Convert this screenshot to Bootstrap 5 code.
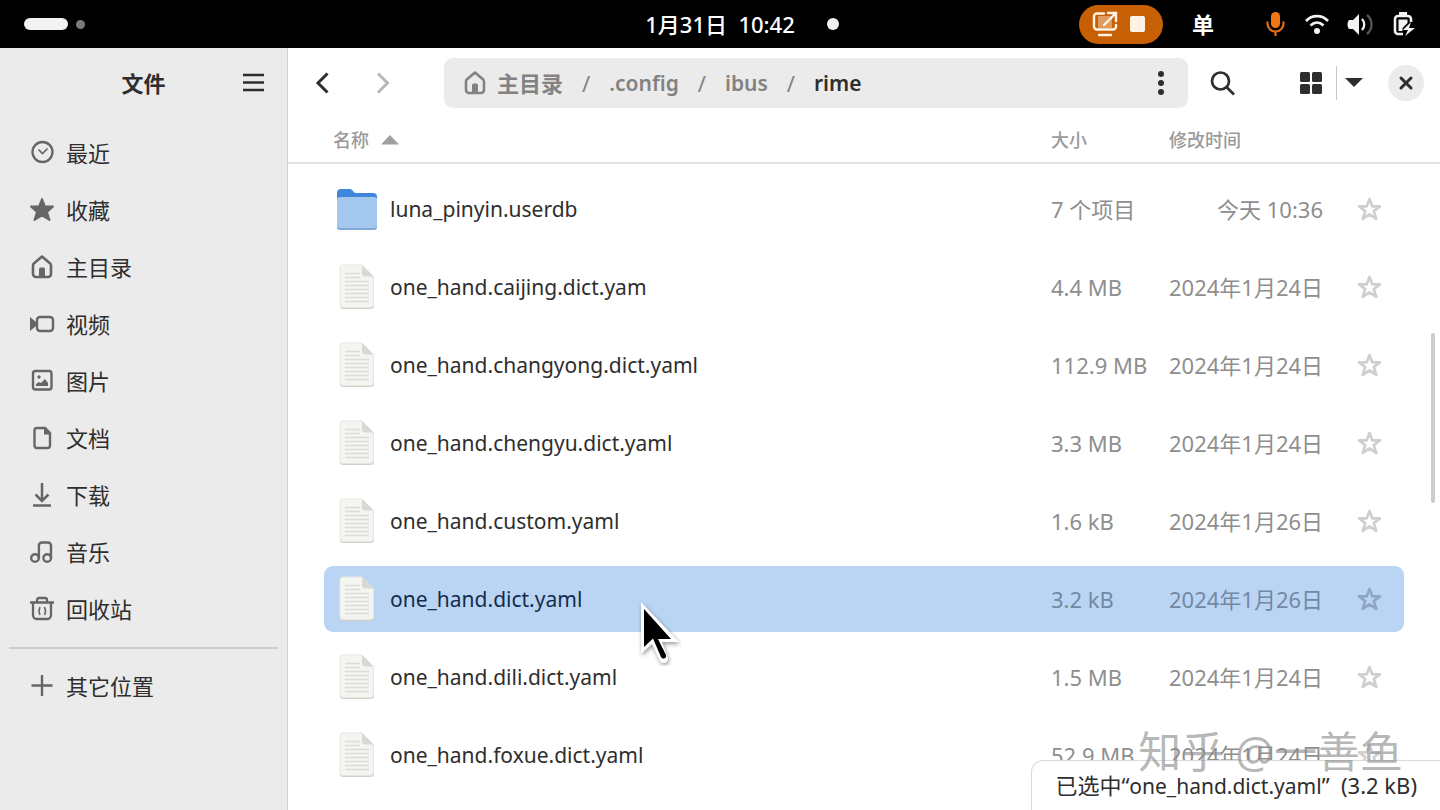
<!DOCTYPE html>
<html lang="zh-CN">
<head>
<meta charset="utf-8">
<meta name="viewport" content="width=device-width, initial-scale=1">
<title>rime</title>
<link rel="stylesheet" href="https://cdn.jsdelivr.net/npm/bootstrap@5.3.0/dist/css/bootstrap.min.css">
<style>
body{font:400 22px/32px "Noto Sans","Noto Sans CJK SC",sans-serif;color:#2e2e2e;background:#fff}
svg{display:block;flex:none}
button{font:inherit}
.topbar{height:48px;font-weight:500}
.topbar .side{flex:1 1 0}
.pill{width:44px;height:12px;border-radius:6px;background:#f2f2f2}
.dot{width:9px;height:9px;border-radius:50%;background:#7a7a7a}
.notice{width:12px;height:12px;border-radius:50%;background:#f2f2f2}
.tray{gap:17px}
.plain{border:0;background:none;padding:0;color:inherit;display:flex;align-items:center;justify-content:center}
.plain.record{width:84px;height:39px;background:#c75f05}
.plain.closebtn{width:36px;height:36px;border-radius:50%;background:#ebebeb}
.sidebar{width:288px;background:#ebebeb;border-right:1px solid #d2d2d2}
.headbar{height:70px}
.apptitle{font-size:22px;line-height:32px}
.places{padding-top:6px}
.places a{height:57px;padding-left:28px;gap:10px;color:#2e2e2e}
.places svg{color:#666}
.places hr{margin:10px 9px 8px;border-top:2px solid #ccc;opacity:1}
.pathbar{height:50px;background:#ebebeb;border-radius:9px;font-weight:600;padding:0 17px}
.pathbar a,.pathbar .sep{color:#828282}
.pathbar .sep{font-weight:400;padding:0 19px}
.latin{font-size:21px}
.plain.split{border-left:1px solid #c8c8c8;height:34px;margin-left:12px;margin-right:25px}
.listing{padding:0 36px;display:flow-root;position:relative}
.listing::before{content:"";position:absolute;left:0;right:0;top:44px;border-top:2px solid #e4e4e4}
.files{width:100%;table-layout:fixed;border-collapse:separate;border-spacing:0 12px;margin-top:-12px}
.files th{height:46px;font-size:18px;font-weight:500;color:#9a9a9a;padding:0 0 3px;line-height:24px}
.files th:first-child{padding-left:9px}
.files td{height:66px;padding:0;color:#8e8e8e;white-space:nowrap}
.files td:first-child{padding-left:11px;color:#2e2e2e;border-radius:9px 0 0 9px}
.files td:last-child{border-radius:0 9px 9px 0;color:#cfcfcf}
.files .when{text-align:right;padding-right:11px}
.files .picked td{background:#bad5f4;color:#7388a3}
.files .picked td:first-child{color:#142c4c}
.files .picked td:last-child{color:#8ea6c3}
.filecell{gap:11px}
.c-size{width:118px}.c-date{width:165px}.c-star{width:70px}
.thumb{right:5px;top:285px;width:4px;height:170px;border-radius:2px;background:#ccc}
.status{right:0;bottom:0;padding:8px 23px;border:1px solid #dadada;border-width:1px 0 0 1px;border-radius:12px 0 0 0;background:#fff}
.pointer{left:636px;top:598px;z-index:5;pointer-events:none}
.credit{right:37px;bottom:30px;font-size:43px;line-height:56px;color:#8c8c8ca0;z-index:6;pointer-events:none}
</style>
</head>
<body class="vh-100 d-flex flex-column overflow-hidden position-relative">
<svg class="d-none" aria-hidden="true">
<defs>
<symbol id="doc" viewBox="0 0 44 52"><path d="M8 6h19l12 11v28a3 3 0 0 1-3 3H8a3 3 0 0 1-3-3V9a3 3 0 0 1 3-3z" fill="#d2d2cc"/><path d="M8 4h19l11.500 11.500v28a3 3 0 0 1-3 3H8a3 3 0 0 1-3-3V7a3 3 0 0 1 3-3z" fill="#f4f4f0" stroke="#e6e6e1"/><path d="M27 4l11.500 11.500H30a3 3 0 0 1-3-3z" fill="#d9d9d4"/><path d="M10 12.500h15M10 16.500h15M10 20.500h24M10 24.500h24M10 28.500h24M10 32.500h24M10 36.500h24M10 40.500h24" stroke="#dcdcd7" stroke-width="1.300"/></symbol>
<symbol id="star" viewBox="0 0 24 24"><path d="M12 2l2.700 7h7.300l-5.900 4.500 2.400 7.500L12 16.600 5.500 21l2.400-7.500L2 9h7.300z" fill="none" stroke="currentColor" stroke-width="2.600" stroke-linejoin="round"/></symbol>
<symbol id="home" viewBox="0 0 28 28"><path d="M5 12.500c0-1 .4-1.600 1.100-2.200L14 3.600l7.900 6.700c.7.600 1.100 1.200 1.100 2.200V21a3 3 0 0 1-3 3H8a3 3 0 0 1-3-3z" fill="none" stroke="currentColor" stroke-width="2.600" stroke-linejoin="round"/><path d="M11 24v-8a1.500 1.500 0 0 1 1.500-1.500h3A1.500 1.500 0 0 1 17 16v8z" fill="currentColor"/></symbol>
</defs>
</svg>

<header class="topbar bg-black text-white d-flex align-items-center">
<div class="side d-flex align-items-center gap-2 ps-4"><span class="pill"></span><span class="dot"></span></div>
<div class="d-flex align-items-center"><time class="ms-5 me-4">1月31日&nbsp; 10:42</time><span class="notice ms-2 me-1"></span></div>
<div class="side d-flex align-items-center justify-content-end tray pe-4">
<button class="plain record rounded-pill gap-2 me-2" aria-label="停止录制">
<svg width="26" height="26" viewBox="0 0 26 26" fill="none" stroke="#fff3e4" stroke-width="2.400" stroke-linecap="round"><path d="M6 5h14v12H6z" fill="#df9b60" stroke="none"/><path d="M12 2.500H5A3 3 0 0 0 2 5.500v10a3 3 0 0 0 3 3h16a3 3 0 0 0 3-3V14M7 24h12M12 14L23 3M16 2h8v8"/></svg>
<svg width="24" height="24" viewBox="0 0 24 24"><rect x="4" y="4" width="15" height="16" rx="2" fill="#fff3e4"/></svg>
</button>
<span class="ms-1 me-4 fw-bold">单</span>
<svg class="ms-2" width="24" height="26" viewBox="0 0 24 26" fill="none" stroke="#e66d0c" stroke-width="2.200"><rect x="8" y="1" width="9" height="16" rx="4.500" fill="#f07814" stroke="none"/><path d="M4.500 10.500v2a8 8 0 0 0 16 0v-2M12.500 20v5"/></svg>
<svg width="26" height="26" viewBox="0 0 26 26" fill="none" stroke="#f2f2f2" stroke-width="2.600"><path d="M2 10c6-6.500 16-6.500 22 0M6.500 14.500c4-4 9-4 13 0" /><circle cx="13" cy="20" r="3" fill="#f2f2f2" stroke="none"/></svg>
<svg width="26" height="26" viewBox="0 0 26 26" fill="none" stroke-width="2.300"><path d="M2 9h4l6-6v21l-6-6H2c-2-2-2-7 0-9z" fill="#f2f2f2"/><path d="M15 8c3 3 3 8 0 11" stroke="#f2f2f2"/><path d="M20 4c6 5 6 14 0 19" stroke="#555"/></svg>
<svg width="26" height="26" viewBox="0 0 26 26"><path d="M13 23H8a3 3 0 0 1-3-3V8a3 3 0 0 1 3-3h10a3 3 0 0 1 3 3v3" fill="none" stroke="#f2f2f2" stroke-width="2.600"/><path d="M9 1h8v4H9zM8.500 8.500h9V12l-5 5v3h-4zM21 11l-8 8h5l-3 6 10-8h-6z" fill="#f2f2f2"/></svg>
</div>
</header>

<div class="d-flex flex-grow-1 position-relative overflow-hidden">
<aside class="sidebar flex-shrink-0">
<div class="headbar d-flex align-items-center position-relative justify-content-center">
<h1 class="apptitle m-0 fw-bold">文件</h1>
<button class="plain position-absolute end-0 me-3 p-1" aria-label="菜单"><svg width="28" height="28" viewBox="0 0 28 28"><path d="M4 6h21M4 13.500h21M4 21h21" stroke="#2e2e2e" stroke-width="2.600"/></svg></button>
</div>
<nav class="places d-flex flex-column" aria-label="位置">
<a href="#" class="d-flex align-items-center text-decoration-none"><svg width="28" height="28" viewBox="0 0 28 28" fill="none" stroke="currentColor"><circle cx="14.500" cy="13" r="10" stroke-width="2.300"/><path d="M10.500 10.500l4 4 5-5" stroke-width="1.700"/></svg>最近</a>
<a href="#" class="d-flex align-items-center text-decoration-none"><svg width="28" height="28" viewBox="0 0 28 28"><path d="M14 3l3 7.500h8L19 16l2.500 8L14 19.500 6.500 24 9 16l-6-5.500h8z" fill="currentColor" stroke="currentColor" stroke-width="2" stroke-linejoin="round"/></svg>收藏</a>
<a href="#" class="d-flex align-items-center text-decoration-none"><svg width="28" height="28"><use href="#home"/></svg>主目录</a>
<a href="#" class="d-flex align-items-center text-decoration-none"><svg width="28" height="28" viewBox="0 0 28 28"><path d="M2 7l6 5v4l-6 5z" fill="currentColor"/><rect x="9" y="7" width="16" height="14" rx="3" fill="none" stroke="currentColor" stroke-width="2.400"/></svg>视频</a>
<a href="#" class="d-flex align-items-center text-decoration-none"><svg width="28" height="28" viewBox="0 0 28 28"><rect x="5" y="4" width="18.500" height="18.500" rx="2.500" fill="none" stroke="currentColor" stroke-width="2.400"/><circle cx="11" cy="10" r="1.700" fill="currentColor"/><path d="M8 19v-2l3-2 2 1 4-4 3 4v3z" fill="currentColor"/></svg>图片</a>
<a href="#" class="d-flex align-items-center text-decoration-none"><svg width="28" height="28" viewBox="0 0 28 28"><path d="M9 4h8l5 5v12.500a2.500 2.500 0 0 1-2.500 2.500H9a2.500 2.500 0 0 1-2.500-2.500v-15A2.500 2.500 0 0 1 9 4z" fill="none" stroke="currentColor" stroke-width="2.400"/><path d="M16 4v6.500h6.500z" fill="currentColor"/></svg>文档</a>
<a href="#" class="d-flex align-items-center text-decoration-none"><svg width="28" height="28" viewBox="0 0 28 28"><path d="M14 2v18M7.500 13.500l6.500 6.500 6.500-6.500M5 24.500h18" fill="none" stroke="currentColor" stroke-width="2.500"/></svg>下载</a>
<a href="#" class="d-flex align-items-center text-decoration-none"><svg width="28" height="28" viewBox="0 0 28 28" fill="none" stroke="currentColor" stroke-width="2.400"><circle cx="7" cy="20" r="3.800"/><circle cx="19.200" cy="20" r="3.800"/><path d="M10.900 20V7.500a3 3 0 0 1 3-3H20a3 3 0 0 1 3 3V20"/></svg>音乐</a>
<a href="#" class="d-flex align-items-center text-decoration-none"><svg width="28" height="28" viewBox="0 0 28 28" fill="none" stroke="currentColor" stroke-width="2.300"><path d="M2 7.500h24M9 7V5a2 2 0 0 1 2-2h6a2 2 0 0 1 2 2v2M5 8v12a4 4 0 0 0 4 4h10a4 4 0 0 0 4-4V8"/><path d="M12 12q-2 4 0 8M16.500 12q2 4 0 8" stroke-width="1.600"/></svg>回收站</a>
<hr>
<a href="#" class="d-flex align-items-center text-decoration-none"><svg width="28" height="28" viewBox="0 0 28 28"><path d="M14 3v21M3.500 13.500h21" stroke="currentColor" stroke-width="2.400"/></svg>其它位置</a>
</nav>
</aside>

<main class="flex-grow-1">
<div class="headbar d-flex align-items-center ps-4 pe-3">
<button class="plain" aria-label="后退"><svg width="22" height="28" viewBox="0 0 22 28"><path d="M15.500 4.500L6 14l9.500 9.500" fill="none" stroke="#2e2e2e" stroke-width="3"/></svg></button>
<button class="plain ms-4 ps-3" aria-label="前进" disabled><svg width="22" height="28" viewBox="0 0 22 28"><path d="M4 4.500l9.500 9.500L4 23.500" fill="none" stroke="#b8b8b8" stroke-width="3"/></svg></button>
<nav class="pathbar d-flex align-items-center flex-grow-1 ms-5" aria-label="路径">
<a href="#" class="d-flex align-items-center text-decoration-none gap-2"><svg width="28" height="28"><use href="#home"/></svg>主目录</a>
<span class="sep">/</span><a href="#" class="latin text-decoration-none">.config</a>
<span class="sep">/</span><a href="#" class="latin text-decoration-none">ibus</a>
<span class="sep">/</span><span class="latin">rime</span>
<button class="plain ms-auto" aria-label="更多"><svg width="20" height="28" viewBox="0 0 20 28" fill="#2e2e2e"><circle cx="10" cy="5" r="3"/><circle cx="10" cy="14" r="3"/><circle cx="10" cy="23" r="3"/></svg></button>
</nav>
<button class="plain ms-3 ps-1" aria-label="搜索"><svg width="28" height="28" viewBox="0 0 28 28" fill="none" stroke="#2e2e2e" stroke-width="2.700"><circle cx="12.500" cy="12" r="8.500"/><path d="M18.500 18l7.500 7.500"/></svg></button>
<button class="plain ms-5 ps-3" aria-label="网格视图"><svg width="24" height="24" viewBox="0 0 24 24" fill="#2e2e2e"><rect x="0" y="1" width="10" height="10" rx="1.500"/><rect x="12" y="1" width="10" height="10" rx="1.500"/><rect x="0" y="13" width="10" height="10" rx="1.500"/><rect x="12" y="13" width="10" height="10" rx="1.500"/></svg></button>
<button class="plain split ps-2" aria-label="视图选项"><svg width="18" height="10" viewBox="0 0 18 10"><path d="M0 0h18L9 9z" fill="#2e2e2e"/></svg></button>
<button class="plain closebtn" aria-label="关闭"><svg width="16" height="16" viewBox="0 0 16 16"><path d="M3 3l10 10M13 3L3 13" stroke="#2e2e2e" stroke-width="3" stroke-linecap="round"/></svg></button>
</div>
<div class="listing">
<table class="files">
<colgroup><col><col class="c-size"><col class="c-date"><col class="c-star"></colgroup>
<thead><tr><th><span class="d-flex align-items-center gap-2">名称 <svg class="ms-1" width="18" height="10" viewBox="0 0 18 10"><path d="M0 9.500h18L9 0z" fill="#a0a0a0"/></svg></span></th><th>大小</th><th>修改时间</th><th></th></tr></thead>
<tbody id="rows"></tbody>
</table>
</div>
<div class="thumb position-absolute"></div>
<div class="status position-absolute">已选中“<span class="latin">one_hand.dict.yaml</span>”&nbsp; (3.2 kB)</div>
</main>
</div>
<svg class="pointer position-absolute" width="46" height="68" viewBox="0 0 46 68"><path d="M5 4v52l11-10 8 17c3 4 9 1 8-3l-6-16h17z" fill="#fff" style="filter:drop-shadow(1px 2px 2px #0006)"/><path d="M8 11v38l9-8.500L25 59c2 3 6 1 5-2l-8-16h13z" fill="#000"/></svg>
<div class="credit position-absolute">知乎 @一善鱼</div>
<script src="https://cdn.jsdelivr.net/npm/bootstrap@5.3.0/dist/js/bootstrap.bundle.min.js"></script>
<script>
const files=[
["luna_pinyin.userdb","7 个项目","今天 10:36"],
["one_hand.caijing.dict.yam","4.4 MB","2024年1月24日"],
["one_hand.changyong.dict.yaml","112.9 MB","2024年1月24日"],
["one_hand.chengyu.dict.yaml","3.3 MB","2024年1月24日"],
["one_hand.custom.yaml","1.6 kB","2024年1月26日"],
["one_hand.dict.yaml","3.2 kB","2024年1月26日"],
["one_hand.dili.dict.yaml","1.5 MB","2024年1月24日"],
["one_hand.foxue.dict.yaml","52.9 MB","2024年1月24日"]];
const folder='<svg width="44" height="52" viewBox="0 0 44 52"><path d="M2 10a4 4 0 0 1 4-4h9c3 0 3 4 6 4h17a4 4 0 0 1 4 4v12H2z" fill="#3f86dd"/><rect x="2" y="15" width="40" height="32" rx="3" fill="#7fa9d8"/><rect x="2" y="14" width="40" height="31" rx="3" fill="#a3c7ef"/></svg>';
const doc='<svg width="44" height="52"><use href="#doc"/></svg>';
document.getElementById("rows").innerHTML=files.map((f,i)=>`<tr class="${i==5?"picked":""}"><td><div class="filecell latin d-flex align-items-center">${i?doc:folder}${f[0]}</div></td><td>${f[1]}</td><td class="when">${f[2]}</td><td><button class="plain mx-auto" aria-label="收藏"><svg width="25" height="25"><use href="#star"/></svg></button></td></tr>`).join("");
</script>
</body>
</html>
